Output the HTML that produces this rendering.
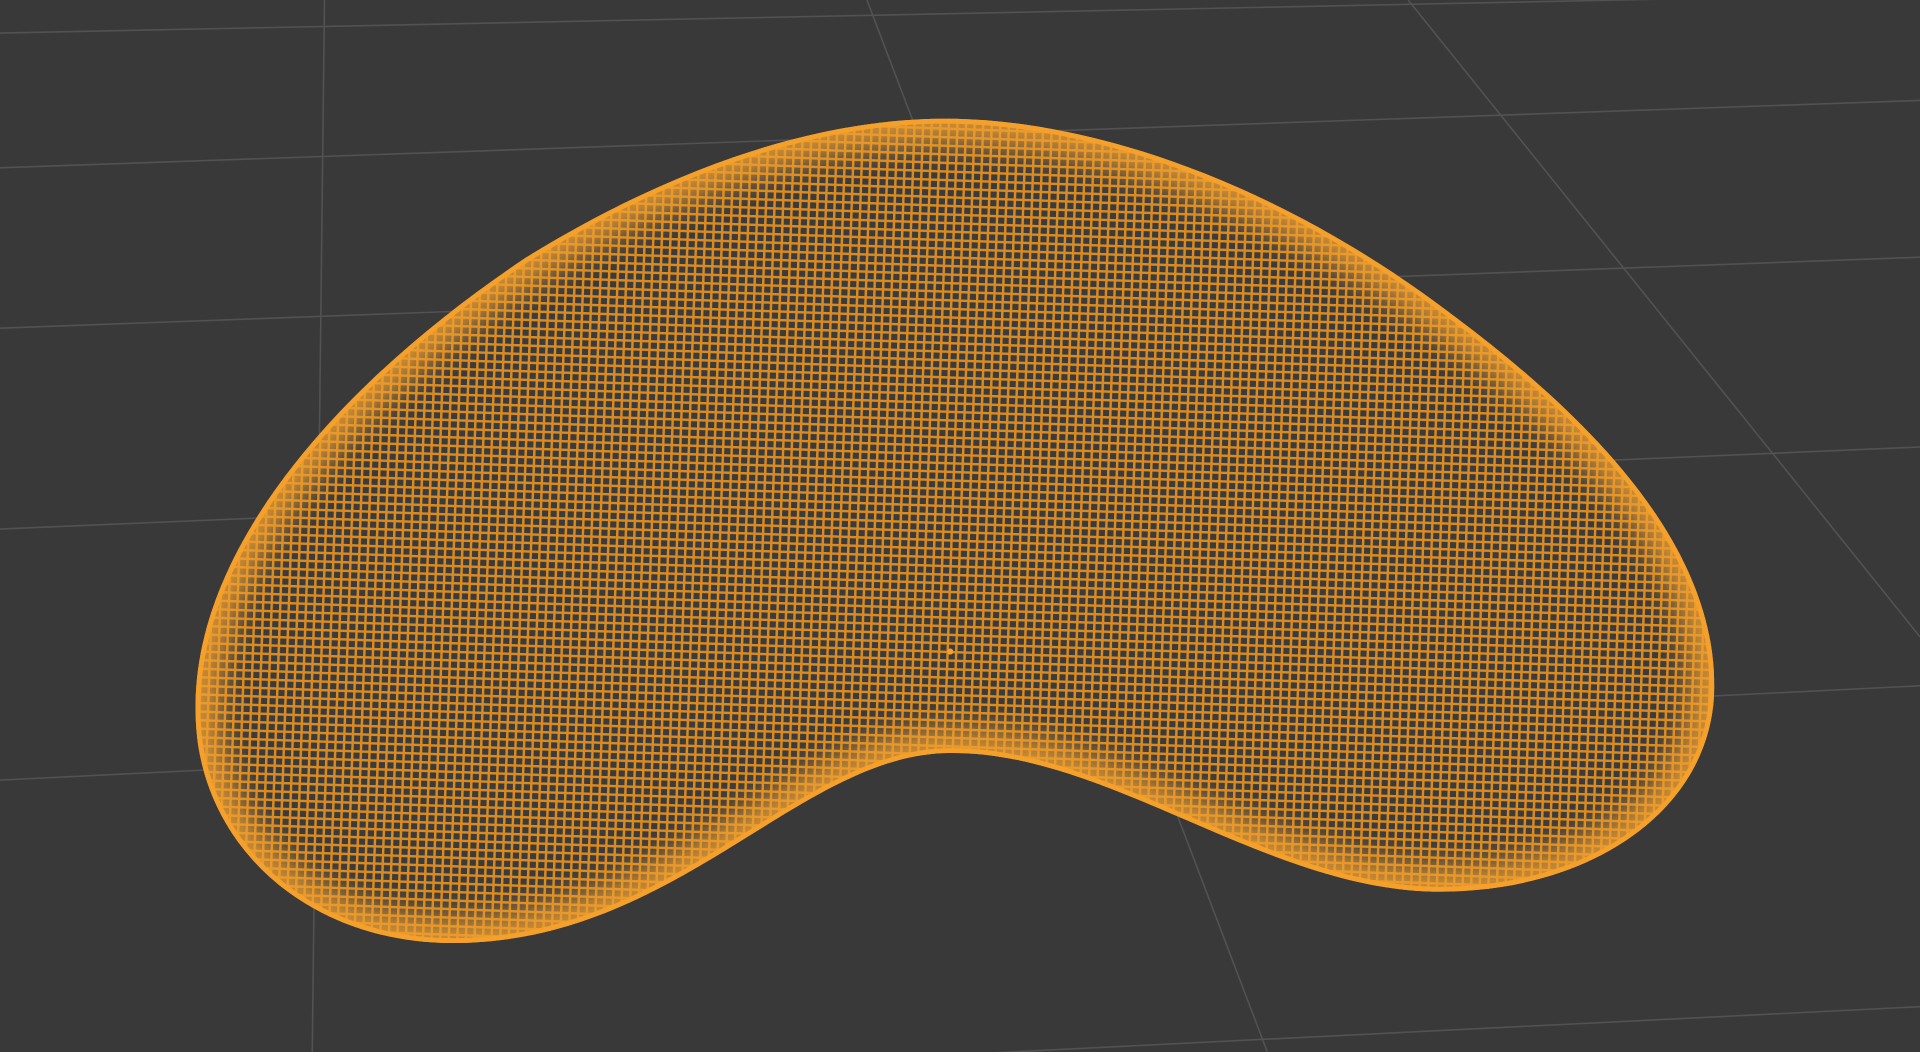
<!DOCTYPE html>
<html><head><style>html,body{margin:0;padding:0;background:#393939;overflow:hidden}svg{display:block}</style></head>
<body>
<svg width="1920" height="1052" viewBox="0 0 1568 859" preserveAspectRatio="none" xmlns="http://www.w3.org/2000/svg">
<defs>
<pattern id="mesh" width="7" height="7" patternUnits="userSpaceOnUse" patternTransform="rotate(2)">
<rect width="7" height="7" fill="#3a3b3d"/>
<rect x="0" y="0" width="7" height="2" fill="#d98b22"/>
<rect x="0" y="0" width="2" height="7" fill="#d98b22"/>
</pattern>
<clipPath id="cp"><path id="shp" d="M160,590 C152,450 280,310 430,210 C560,130 680,95 780,97 C910,100 1060,160 1190,260 C1310,350 1400,450 1400,560 C1400,660 1300,730 1170,728 C1030,725 900,610 770,615 C650,620 550,770 370,770 C250,770 165,690 160,590 Z"/></clipPath>
<filter id="bl"><feGaussianBlur stdDeviation="12"/></filter>
</defs>
<rect width="1568" height="859" fill="#393939"/>
<g stroke="#525252" stroke-width="1.3" fill="none">
<line x1="0" y1="27" x2="1568" y2="-5"/>
<line x1="0" y1="137" x2="1568" y2="82"/>
<line x1="0" y1="268" x2="1568" y2="210"/>
<line x1="0" y1="432" x2="1568" y2="365"/>
<line x1="0" y1="637" x2="1568" y2="560"/>
<line x1="0" y1="900" x2="1568" y2="822"/>
<line x1="265" y1="0" x2="255" y2="859"/>
<line x1="708" y1="0" x2="1035" y2="859"/>
<line x1="1150" y1="0" x2="1568" y2="520"/>
</g>
<g clip-path="url(#cp)">
<rect width="1568" height="859" fill="url(#mesh)"/>
<use href="#shp" fill="none" stroke="#f0a030" stroke-width="40" filter="url(#bl)" opacity="0.85"/>
<use href="#shp" fill="none" stroke="#f5a02a" stroke-width="8"/>
</g>
<circle cx="776" cy="532" r="2.5" fill="#f5a02a"/>
</svg>
</body></html>
